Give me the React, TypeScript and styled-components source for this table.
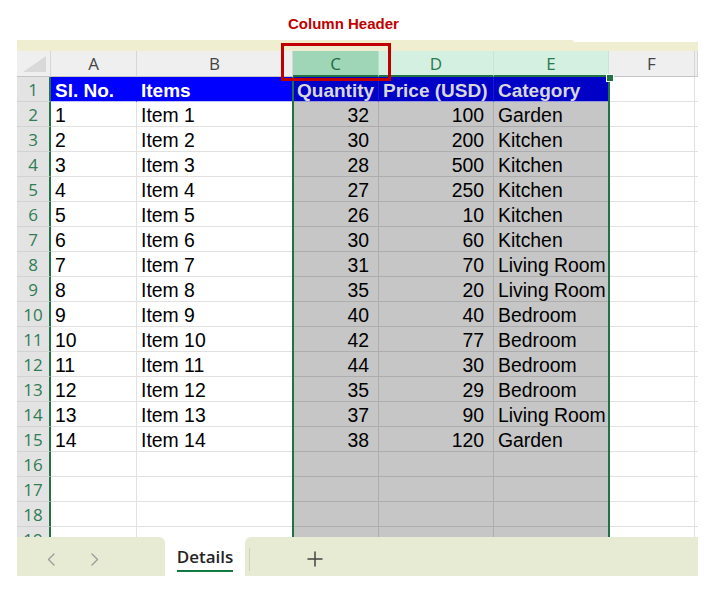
import React from 'react';
import styled, { createGlobalStyle, css } from 'styled-components';

const Global = createGlobalStyle`
  html, body { margin: 0; padding: 0; background: #ffffff; }
  #root { width: 720px; height: 597px; }
`;

const Page = styled.div`
  position: relative;
  width: 720px;
  height: 597px;
  overflow: hidden;
  background: #ffffff;
  font-family: "Liberation Sans", Arial, sans-serif;
`;

const Title = styled.div`
  height: 40px;
  box-sizing: border-box;
  padding: 15px 0 0 288px;
  font: bold 15px/17px "Liberation Sans", Arial, sans-serif;
  color: #c00000;
`;

const Callout = styled.div`
  position: absolute;
  left: 281px;
  top: 43px;
  width: 110px;
  height: 38px;
  box-sizing: border-box;
  border: 3px solid #c00000;
  pointer-events: none;
  z-index: 5;
`;

const Sheet = styled.div`
  margin-left: 17px;
  width: 681px;
  display: flex;
  flex-direction: column;
`;

const Strip = styled.div`
  position: relative;
  height: 11px;
  background: #efeed1;
  &::after {
    content: '';
    position: absolute;
    right: 0;
    top: 0;
    width: 125px;
    height: 2px;
    background: #ffffff;
    border-bottom-left-radius: 3px;
  }
`;

const GridWrap = styled.div`
  position: relative;
  height: 486px;
  overflow: hidden;
`;

const Grid = styled.div`
  display: grid;
  grid-template-columns: 34px 86px 156px 86px 115px 115px 86px 3px;
  grid-template-rows: 26px;
  grid-auto-rows: 25px;
`;

const Corner = styled.div`
  position: relative;
  box-sizing: border-box;
  background: #efefef;
  border-right: 1px solid #d6d6d6;
  border-bottom: 1px solid #c4c4c4;
  &::after {
    content: '';
    position: absolute;
    right: 4px;
    bottom: 4px;
    width: 23px;
    height: 16px;
    background: #d9d9d9;
    clip-path: polygon(100% 0, 100% 100%, 0 100%);
  }
`;

type HeadState = 'none' | 'active' | 'sel';

const ColHead = styled.div<{ $state: HeadState }>`
  box-sizing: border-box;
  display: flex;
  align-items: center;
  justify-content: center;
  padding-top: 1px;
  font: 400 17px/20px "Open Sans", "Noto Sans", sans-serif;
  border-right: 1px solid #d6d6d6;
  ${({ $state }) =>
    $state === 'none'
      ? css`
          background: #efefef;
          color: #444444;
          border-bottom: 1px solid #c4c4c4;
        `
      : css`
          background: ${$state === 'active' ? '#a0d6b8' : '#d3f0e0'};
          color: ${$state === 'active' ? '#1e6b41' : '#2b7a4f'};
          border-bottom: 2px solid #217346;
          border-right-color: ${$state === 'active' ? '#b9e0ca' : '#c5e6d3'};
        `}
`;

const RowHead = styled.div`
  box-sizing: border-box;
  display: flex;
  align-items: center;
  justify-content: center;
  padding-top: 1px;
  background: #e3e3e3;
  color: #2f7d55;
  font: 400 17px/20px "Open Sans", "Noto Sans", sans-serif;
  border-bottom: 1px solid #d2d2d2;
  border-right: 2px solid #217346;
`;

const Cell = styled.div<{ $sel?: boolean; $head?: boolean; $right?: boolean }>`
  box-sizing: border-box;
  position: relative;
  white-space: nowrap;
  font-size: 19.4px;
  line-height: 25px;
  padding: 1px ${({ $right }) => ($right ? '9px' : '4px')} 0 4px;
  text-align: ${({ $right }) => ($right ? 'right' : 'left')};
  color: #000000;
  background: #ffffff;
  border-right: 1px solid #e1e1e1;
  border-bottom: 1px solid #e1e1e1;
  ${({ $sel }) =>
    $sel &&
    css`
      background: #c6c6c6;
      border-right-color: #adadad;
      border-bottom-color: #adadad;
    `}
  ${({ $head, $sel }) =>
    $head &&
    css`
      font-weight: bold;
      font-size: 19px;
      background: ${$sel ? '#0000c6' : '#0000ff'};
      color: ${$sel ? '#d8d8d8' : '#ffffff'};
      border-right-color: ${$sel ? '#1a1ac9' : '#0000ff'};
      border-bottom-color: ${$sel ? '#9a9adf' : '#c0c0ff'};
    `}
`;

const Selection = styled.div`
  position: absolute;
  left: 275px;
  top: 26px;
  width: 318px;
  bottom: 0;
  box-sizing: border-box;
  border-left: 2px solid #217346;
  border-right: 2px solid #217346;
  pointer-events: none;
`;

const Handle = styled.div`
  position: absolute;
  right: -5px;
  top: -2px;
  width: 6px;
  height: 6px;
  background: #217346;
  box-shadow: 0 0 0 1px #ffffff;
`;

const TabBar = styled.div`
  display: flex;
  height: 39px;
  background: #ffffff;
`;

const LeftPane = styled.div`
  width: 148px;
  box-sizing: border-box;
  background: #e8ebd3;
  border-top-right-radius: 6px;
  display: flex;
  align-items: center;
  padding: 5px 0 0 30px;
  gap: 36px;
`;

const Tab = styled.div`
  width: 80px;
  display: flex;
  justify-content: center;
  align-items: flex-start;
  padding-top: 10px;
  box-sizing: border-box;
  background: #ffffff;
`;

const TabLabel = styled.span`
  display: block;
  font: 600 17px/20px "Open Sans", "Noto Sans", sans-serif;
  color: #242424;
  padding-bottom: 3px;
  border-bottom: 2px solid #107c41;
`;

const RightPane = styled.div`
  flex: 1;
  box-sizing: border-box;
  background: #e8ebd3;
  border-top-left-radius: 6px;
  display: flex;
  align-items: center;
  padding-top: 5px;
`;

const Separator = styled.div`
  margin-left: 4px;
  width: 1px;
  height: 23px;
  background: #cfd0c4;
`;

const PlusBtn = styled.div`
  margin-left: 57px;
  display: flex;
`;

const Chevron = ({ dir }: { dir: 'left' | 'right' }) => (
  <svg width="8" height="13" viewBox="0 0 8 13">
    <path
      d={dir === 'left' ? 'M7 1 L1.5 6.5 L7 12' : 'M1 1 L6.5 6.5 L1 12'}
      fill="none"
      stroke="#9a9a9a"
      strokeWidth="1.3"
      strokeLinecap="round"
      strokeLinejoin="round"
    />
  </svg>
);

const Plus = () => (
  <svg width="16" height="16" viewBox="0 0 16 16">
    <path d="M8 1 V15 M1 8 H15" stroke="#444444" strokeWidth="1.5" strokeLinecap="round" />
  </svg>
);

type Row = [number, string, number, number, string];

const data: Row[] = [
  [1, 'Item 1', 32, 100, 'Garden'],
  [2, 'Item 2', 30, 200, 'Kitchen'],
  [3, 'Item 3', 28, 500, 'Kitchen'],
  [4, 'Item 4', 27, 250, 'Kitchen'],
  [5, 'Item 5', 26, 10, 'Kitchen'],
  [6, 'Item 6', 30, 60, 'Kitchen'],
  [7, 'Item 7', 31, 70, 'Living Room'],
  [8, 'Item 8', 35, 20, 'Living Room'],
  [9, 'Item 9', 40, 40, 'Bedroom'],
  [10, 'Item 10', 42, 77, 'Bedroom'],
  [11, 'Item 11', 44, 30, 'Bedroom'],
  [12, 'Item 12', 35, 29, 'Bedroom'],
  [13, 'Item 13', 37, 90, 'Living Room'],
  [14, 'Item 14', 38, 120, 'Garden'],
];

const columns: { label: string; state: HeadState }[] = [
  { label: 'A', state: 'none' },
  { label: 'B', state: 'none' },
  { label: 'C', state: 'active' },
  { label: 'D', state: 'sel' },
  { label: 'E', state: 'sel' },
  { label: 'F', state: 'none' },
];

export default function App() {
  const blankRows = [16, 17, 18, 19];
  return (
    <Page>
      <Global />
      <Title>Column Header</Title>
      <Callout />
      <Sheet>
        <Strip />
        <GridWrap>
          <Grid>
            <Corner />
            {columns.map((c) => (
              <ColHead key={c.label} $state={c.state}>
                {c.label}
              </ColHead>
            ))}
            <ColHead $state="none" />

            <RowHead>1</RowHead>
            <Cell $head>Sl. No.</Cell>
            <Cell $head>Items</Cell>
            <Cell $head $sel>Quantity</Cell>
            <Cell $head $sel>Price (USD)</Cell>
            <Cell $head $sel>Category</Cell>
            <Cell />
            <Cell />

            {data.map((r, i) => (
              <React.Fragment key={r[0]}>
                <RowHead>{i + 2}</RowHead>
                <Cell>{r[0]}</Cell>
                <Cell>{r[1]}</Cell>
                <Cell $sel $right>{r[2]}</Cell>
                <Cell $sel $right>{r[3]}</Cell>
                <Cell $sel>{r[4]}</Cell>
                <Cell />
                <Cell />
              </React.Fragment>
            ))}

            {blankRows.map((n) => (
              <React.Fragment key={n}>
                <RowHead>{n}</RowHead>
                <Cell />
                <Cell />
                <Cell $sel />
                <Cell $sel />
                <Cell $sel />
                <Cell />
                <Cell />
              </React.Fragment>
            ))}
          </Grid>
          <Selection>
            <Handle />
          </Selection>
        </GridWrap>
        <TabBar>
          <LeftPane>
            <Chevron dir="left" />
            <Chevron dir="right" />
          </LeftPane>
          <Tab>
            <TabLabel>Details</TabLabel>
          </Tab>
          <RightPane>
            <Separator />
            <PlusBtn>
              <Plus />
            </PlusBtn>
          </RightPane>
        </TabBar>
      </Sheet>
    </Page>
  );
}
